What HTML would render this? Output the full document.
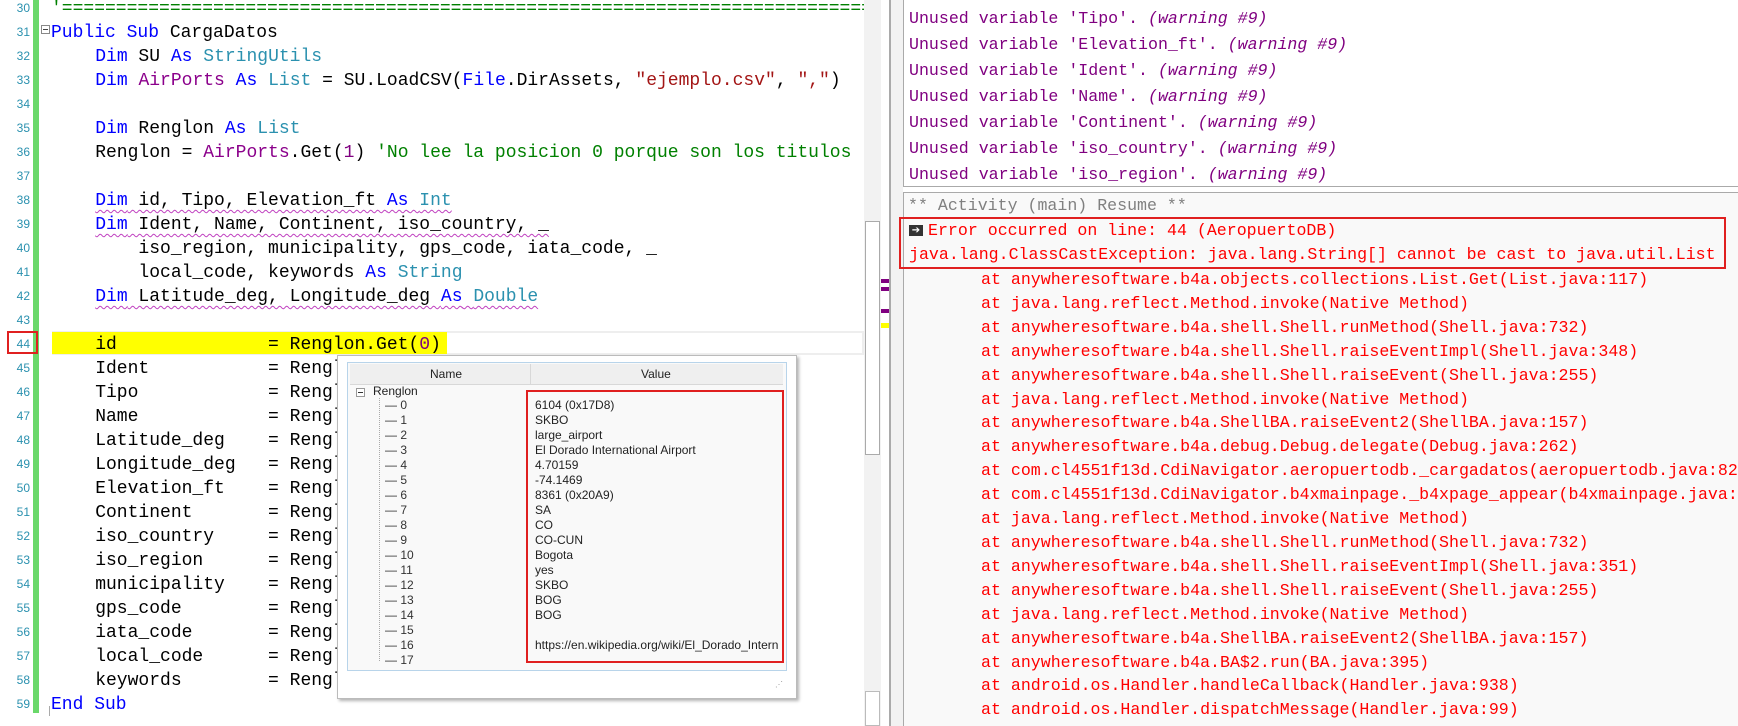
<!DOCTYPE html>
<html><head><meta charset="utf-8"><style>
*{margin:0;padding:0;box-sizing:border-box}
body{width:1738px;height:726px;overflow:hidden;background:#fff;position:relative;font-family:"Liberation Mono",monospace}
.ln{position:absolute;left:0;width:30px;text-align:right;font-size:12px;color:#2b91af;font-family:"Liberation Sans",sans-serif}
.cl{position:absolute;left:52px;font-size:18px;white-space:pre;color:#000;line-height:24px;height:24px}
.k{color:#0000ff}.t{color:#2b91af}.p{color:#8b008b}.s{color:#a31515}.c{color:#008000}.n{color:#800080}
.w{text-decoration:underline wavy #c040c0;text-decoration-thickness:1px;text-underline-offset:4px}
.r{position:absolute;font-size:16.6px;white-space:pre;line-height:24px}
.wa{color:#800080;left:909px}.wa i{font-style:italic}
.st{color:#f00;left:981px}
.pl{position:absolute;font-family:"Liberation Sans",sans-serif;font-size:12px;color:#222;line-height:15px;white-space:nowrap}
</style></head><body>
<div style="position:absolute;left:33px;top:0;width:6px;height:713px;background:#6ad86a"></div>
<div style="position:absolute;left:41px;top:25px;width:9px;height:9px;border:1px solid #888;background:#fff"></div>
<div style="position:absolute;left:43px;top:29px;width:5px;height:1px;background:#444"></div>
<div style="position:absolute;left:49px;top:706px;width:1px;height:10px;background:#aaa"></div>

<div class="ln" style="top:1px">30</div><div class="ln" style="top:25px">31</div><div class="ln" style="top:49px">32</div><div class="ln" style="top:73px">33</div><div class="ln" style="top:97px">34</div><div class="ln" style="top:121px">35</div><div class="ln" style="top:145px">36</div><div class="ln" style="top:169px">37</div><div class="ln" style="top:193px">38</div><div class="ln" style="top:217px">39</div><div class="ln" style="top:241px">40</div><div class="ln" style="top:265px">41</div><div class="ln" style="top:289px">42</div><div class="ln" style="top:313px">43</div><div class="ln" style="top:337px">44</div><div class="ln" style="top:361px">45</div><div class="ln" style="top:385px">46</div><div class="ln" style="top:409px">47</div><div class="ln" style="top:433px">48</div><div class="ln" style="top:457px">49</div><div class="ln" style="top:481px">50</div><div class="ln" style="top:505px">51</div><div class="ln" style="top:529px">52</div><div class="ln" style="top:553px">53</div><div class="ln" style="top:577px">54</div><div class="ln" style="top:601px">55</div><div class="ln" style="top:625px">56</div><div class="ln" style="top:649px">57</div><div class="ln" style="top:673px">58</div><div class="ln" style="top:697px">59</div>
<div style="position:absolute;left:7px;top:331px;width:31px;height:23px;border:2px solid #e02020"></div>

<div style="position:absolute;left:52px;top:331px;width:812px;height:24px;border:2px solid #eee"></div>
<div style="position:absolute;left:52px;top:332px;width:395px;height:22px;background:#ffff00"></div>

<div style="position:absolute;left:0;top:0;width:864px;height:726px;overflow:hidden">
<div class="cl c" style="top:-3px;left:51px">'==============================================================================</div>
<div class="cl" style="top:21px;left:51px"><span class="k">Public Sub</span> CargaDatos</div>
<div class="cl" style="top:45px">    <span class="k">Dim</span> SU <span class="k">As</span> <span class="t">StringUtils</span></div>
<div class="cl" style="top:69px">    <span class="k">Dim</span> <span class="p">AirPorts</span> <span class="k">As</span> <span class="t">List</span> = SU.LoadCSV(<span class="k">File</span>.DirAssets, <span class="s">"ejemplo.csv"</span>, <span class="s">","</span>)</div>
<div class="cl" style="top:117px">    <span class="k">Dim</span> Renglon <span class="k">As</span> <span class="t">List</span></div>
<div class="cl" style="top:141px">    Renglon = <span class="p">AirPorts</span>.Get(<span class="n">1</span>) <span class="c">'No lee la posicion 0 porque son los titulos</span></div>
<div class="cl" style="top:189px">    <span class="w"><span class="k">Dim</span> id, Tipo, Elevation_ft <span class="k">As</span> <span class="t">Int</span></span></div>
<div class="cl" style="top:213px">    <span class="w"><span class="k">Dim</span> Ident, Name, Continent, iso_country, _</span></div>
<div class="cl" style="top:237px">        iso_region, municipality, gps_code, iata_code, _</div>
<div class="cl" style="top:261px">        local_code, keywords <span class="k">As</span> <span class="t">String</span></div>
<div class="cl" style="top:285px">    <span class="w"><span class="k">Dim</span> Latitude_deg, Longitude_deg <span class="k">As</span> <span class="t">Double</span></span></div>
<div class="cl" style="top:333px">    id              = Renglon.Get(<span class="n">0</span>)</div>
<div class="cl" style="top:357px">    Ident           = Renglon.Get(1)</div>
<div class="cl" style="top:381px">    Tipo            = Renglon.Get(2)</div>
<div class="cl" style="top:405px">    Name            = Renglon.Get(3)</div>
<div class="cl" style="top:429px">    Latitude_deg    = Renglon.Get(4)</div>
<div class="cl" style="top:453px">    Longitude_deg   = Renglon.Get(5)</div>
<div class="cl" style="top:477px">    Elevation_ft    = Renglon.Get(6)</div>
<div class="cl" style="top:501px">    Continent       = Renglon.Get(7)</div>
<div class="cl" style="top:525px">    iso_country     = Renglon.Get(8)</div>
<div class="cl" style="top:549px">    iso_region      = Renglon.Get(9)</div>
<div class="cl" style="top:573px">    municipality    = Renglon.Get(10)</div>
<div class="cl" style="top:597px">    gps_code        = Renglon.Get(11)</div>
<div class="cl" style="top:621px">    iata_code       = Renglon.Get(12)</div>
<div class="cl" style="top:645px">    local_code      = Renglon.Get(13)</div>
<div class="cl" style="top:669px">    keywords        = Renglon.Get(14)</div>
<div class="cl" style="top:693px;left:51px"><span class="k">End Sub</span></div>
</div>

<div style="position:absolute;left:337px;top:355px;width:460px;height:344px;background:#fff;border:1px solid #bbb;box-shadow:2px 2px 3px rgba(0,0,0,.3)"></div>
<div style="position:absolute;left:347px;top:362px;width:440px;height:309px;background:#f9f9f9;border:1px solid #b8d4ea"></div>
<div style="position:absolute;left:350px;top:364px;width:433px;height:21px;background:#efefef;border-bottom:1px solid #d8d8d8"></div>
<div style="position:absolute;left:530px;top:364px;width:1px;height:21px;background:#d8d8d8"></div>
<div class="pl" style="left:430px;top:367px">Name</div>
<div class="pl" style="left:641px;top:367px">Value</div>
<div style="position:absolute;left:356px;top:388px;width:9px;height:9px;border:1px solid #999;background:#fff"></div>
<div style="position:absolute;left:358px;top:392px;width:5px;height:1px;background:#333"></div>
<div class="pl" style="left:373px;top:384px">Renglon</div>
<div style="position:absolute;left:379px;top:398px;width:1px;height:263px;border-left:1px dotted #aaa"></div>
<div class="pl" style="left:385px;top:398px;line-height:15px;color:#333">
— 0<br>— 1<br>— 2<br>— 3<br>— 4<br>— 5<br>— 6<br>— 7<br>— 8<br>— 9<br>— 10<br>— 11<br>— 12<br>— 13<br>— 14<br>— 15<br>— 16<br>— 17</div>
<div class="pl" style="left:535px;top:398px;width:243px;overflow:hidden">6104 (0x17D8)<br>SKBO<br>large_airport<br>El Dorado International Airport<br>4.70159<br>-74.1469<br>8361 (0x20A9)<br>SA<br>CO<br>CO-CUN<br>Bogota<br>yes<br>SKBO<br>BOG<br>BOG<br>&nbsp;<br>https://en.wikipedia.org/wiki/El_Dorado_International</div>
<div style="position:absolute;left:526px;top:390px;width:258px;height:273px;border:2px solid #e02020"></div>
<div style="position:absolute;left:775px;top:680px;color:#999;font-size:8px;font-family:'Liberation Sans',sans-serif">⋰</div>

<div style="position:absolute;left:864px;top:0;width:17px;height:726px;background:#f2f2f2"></div>
<div style="position:absolute;left:865px;top:221px;width:15px;height:234px;background:#fff;border:1px solid #aaa"></div>
<div style="position:absolute;left:865px;top:691px;width:15px;height:35px;background:#fff;border:1px solid #bbb"></div>
<div style="position:absolute;left:881px;top:279px;width:8px;height:4px;background:#800080"></div>
<div style="position:absolute;left:881px;top:287px;width:8px;height:4px;background:#800080"></div>
<div style="position:absolute;left:881px;top:309px;width:8px;height:4px;background:#800080"></div>
<div style="position:absolute;left:881px;top:323px;width:8px;height:5px;background:#ffff00"></div>
<div style="position:absolute;left:889px;top:0;width:2px;height:726px;background:#aaa"></div>
<div style="position:absolute;left:891px;top:0;width:12px;height:726px;background:#f2f2f2"></div>

<div style="position:absolute;left:903px;top:0;width:835px;height:187px;background:#fff;border-left:1px solid #aaa;border-bottom:1px solid #aaa"></div>
<div style="position:absolute;left:903px;top:192px;width:835px;height:534px;background:#f9f9f9;border-left:1px solid #aaa;border-top:1px solid #aaa"></div>

<div class="r wa" style="top:7px">Unused variable 'Tipo'. <i>(warning #9)</i></div>
<div class="r wa" style="top:33px">Unused variable 'Elevation_ft'. <i>(warning #9)</i></div>
<div class="r wa" style="top:59px">Unused variable 'Ident'. <i>(warning #9)</i></div>
<div class="r wa" style="top:85px">Unused variable 'Name'. <i>(warning #9)</i></div>
<div class="r wa" style="top:111px">Unused variable 'Continent'. <i>(warning #9)</i></div>
<div class="r wa" style="top:137px">Unused variable 'iso_country'. <i>(warning #9)</i></div>
<div class="r wa" style="top:163px">Unused variable 'iso_region'. <i>(warning #9)</i></div>

<div class="r" style="top:194px;left:908px;color:#808080">** Activity (main) Resume **</div>
<div style="position:absolute;left:909px;top:225px;width:14px;height:11px;background:#333;color:#fff;font-size:10px;line-height:11px;text-align:center;font-family:'Liberation Sans',sans-serif">➔</div>
<div class="r" style="top:219px;left:928px;color:#f00">Error occurred on line: 44 (AeropuertoDB)</div>
<div class="r" style="top:243px;left:909px;color:#f00">java.lang.ClassCastException: java.lang.String[] cannot be cast to java.util.List</div>
<div style="position:absolute;left:899px;top:217px;width:827px;height:52px;border:2px solid #e02020"></div>

<div class="r st" style="top:268px;line-height:23.9px">at anywheresoftware.b4a.objects.collections.List.Get(List.java:117)
at java.lang.reflect.Method.invoke(Native Method)
at anywheresoftware.b4a.shell.Shell.runMethod(Shell.java:732)
at anywheresoftware.b4a.shell.Shell.raiseEventImpl(Shell.java:348)
at anywheresoftware.b4a.shell.Shell.raiseEvent(Shell.java:255)
at java.lang.reflect.Method.invoke(Native Method)
at anywheresoftware.b4a.ShellBA.raiseEvent2(ShellBA.java:157)
at anywheresoftware.b4a.debug.Debug.delegate(Debug.java:262)
at com.cl4551f13d.CdiNavigator.aeropuertodb._cargadatos(aeropuertodb.java:82)
at com.cl4551f13d.CdiNavigator.b4xmainpage._b4xpage_appear(b4xmainpage.java:
at java.lang.reflect.Method.invoke(Native Method)
at anywheresoftware.b4a.shell.Shell.runMethod(Shell.java:732)
at anywheresoftware.b4a.shell.Shell.raiseEventImpl(Shell.java:351)
at anywheresoftware.b4a.shell.Shell.raiseEvent(Shell.java:255)
at java.lang.reflect.Method.invoke(Native Method)
at anywheresoftware.b4a.ShellBA.raiseEvent2(ShellBA.java:157)
at anywheresoftware.b4a.BA$2.run(BA.java:395)
at android.os.Handler.handleCallback(Handler.java:938)
at android.os.Handler.dispatchMessage(Handler.java:99)</div>
</body></html>
